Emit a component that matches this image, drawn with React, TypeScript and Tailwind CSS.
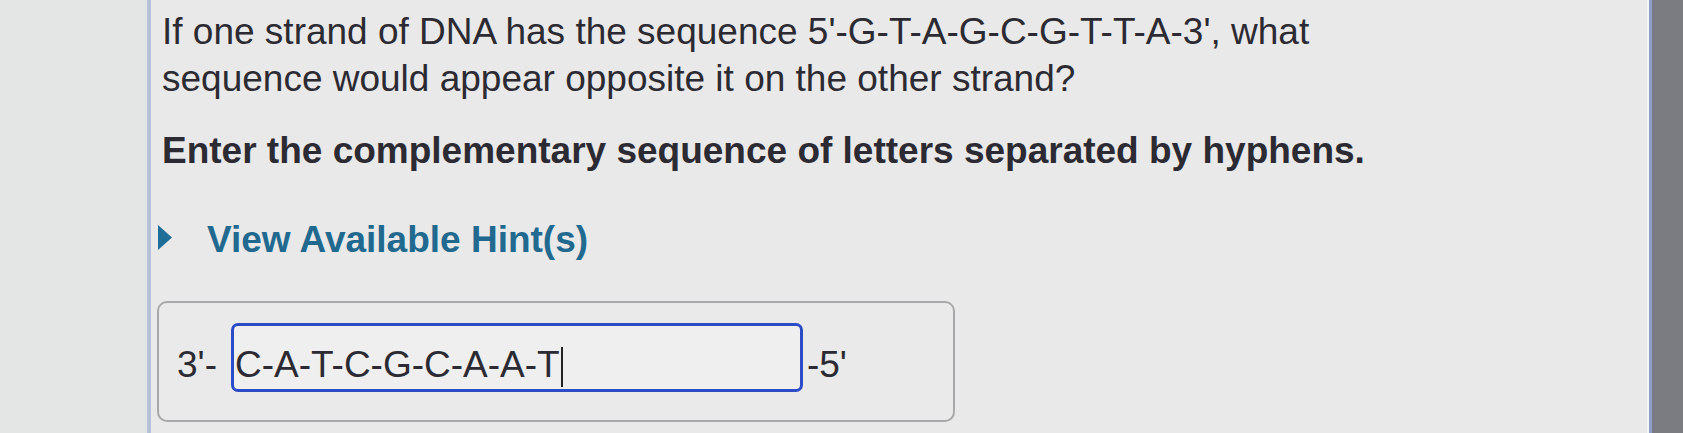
import React from "react";

export default function App() {
  return (
    <div
      className="flex h-[433px] w-[1683px] overflow-hidden bg-[#e8e8e8] text-[#2c2a32]"
      style={{ fontFamily: '"Liberation Sans", Arial, sans-serif' }}
    >
      <div className="w-[147px] shrink-0 bg-[#e4e6e6]" />
      <div className="w-[4px] shrink-0 bg-[#b4c1d7]" />
      <div className="flex-1 bg-[#e9e9e9] pt-[8px]">
        <p className="ml-[11px] text-[37px] leading-[47px]">
          If one strand of DNA has the sequence 5'-G-T-A-G-C-G-T-T-A-3', what
          <br />
          sequence would appear opposite it on the other strand?
        </p>
        <p className="ml-[11px] mt-[25px] text-[37px] font-bold leading-[47px]">
          Enter the complementary sequence of letters separated by hyphens.
        </p>
        <div className="ml-[6px] mt-[42px] flex items-center">
          <svg width="16" height="27" viewBox="0 0 16 27" className="mt-[-4px] shrink-0">
            <polygon points="1,1 15,13.5 1,26" fill="#1f6e98" />
          </svg>
          <span className="ml-[34px] text-[37px] font-bold leading-[47px] text-[#21698f]">
            View Available Hint(s)
          </span>
        </div>
        <div className="ml-[6px] mt-[38px] flex h-[121px] w-[798px] items-start rounded-[10px] border-2 border-[#a8a8aa] bg-[#eaeaea] pl-[18px] pt-[20px]">
          <span className="mt-[23px] text-[37px] leading-none">3'-</span>
          <div className="ml-[14px] flex h-[69px] w-[572px] items-start rounded-[7px] border-[3px] border-[#2b4cc6] bg-[#efefef] pl-[1px] pt-[20px]">
            <span className="text-[37px] leading-none">C-A-T-C-G-C-A-A-T</span>
            <span className="ml-[1px] mt-[1px] h-[40px] w-[2px] bg-[#222]" />
          </div>
          <span className="ml-[4px] mt-[23px] text-[37px] leading-none">-5'</span>
        </div>
      </div>
      <div className="w-[2px] shrink-0 bg-[#f3f5f7]" />
      <div className="w-[3px] shrink-0 bg-[#8d9ec6]" />
      <div className="w-[31px] shrink-0 bg-[#7b7c82]" />
    </div>
  );
}
